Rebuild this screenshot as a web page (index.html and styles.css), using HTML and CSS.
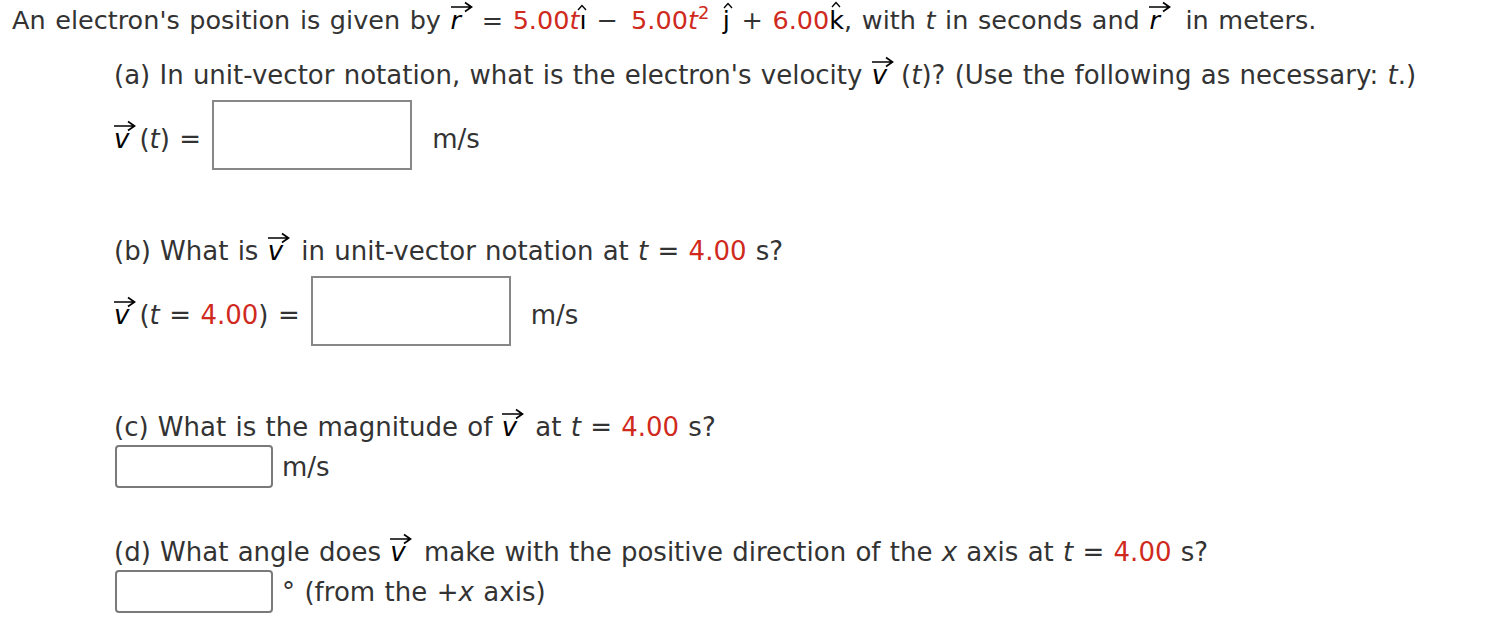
FILE: index.html
```html
<!DOCTYPE html>
<html>
<head>
<meta charset="utf-8">
<link rel="stylesheet" href="styles.css">
</head>
<body>
<div class="page">
  <div class="line intro">An electron's position is given by <span class="vec vec-r1"><i class="sym">r</i><svg class="arrow" width="24" height="12" viewBox="0 0 24 12"><path d="M1 6H21M15 1.5L21.5 6L15 10.5" fill="none" stroke="#000" stroke-width="1.7"/></svg></span> = <span class="red">5.00<i>t</i></span><span class="hat hat-i">ı<svg class="caret" width="10" height="7" viewBox="0 0 10 7"><path d="M1 6L5 1.5L9 6" fill="none" stroke="#000" stroke-width="1.3"/></svg></span> <span class="op">−</span> <span class="red">5.00<i>t</i></span><sup class="sup">2</sup> <span class="hat hat-j">j<svg class="caret" width="10" height="7" viewBox="0 0 10 7"><path d="M1 6L5 1.5L9 6" fill="none" stroke="#000" stroke-width="1.3"/></svg></span> + <span class="red">6.00</span><span class="hat hat-k">k<svg class="caret" width="10" height="7" viewBox="0 0 10 7"><path d="M1 6L5 1.5L9 6" fill="none" stroke="#000" stroke-width="1.3"/></svg></span>, with <i>t</i> in seconds and <span class="vec vec-r2"><i class="sym">r</i><svg class="arrow" width="24" height="12" viewBox="0 0 24 12"><path d="M1 6H21M15 1.5L21.5 6L15 10.5" fill="none" stroke="#000" stroke-width="1.7"/></svg></span> in meters.</div>

  <div class="part part-a">
    <div class="line q">(a) In unit-vector notation, what is the electron's velocity <span class="vec vec-v vec-q"><i class="sym">v</i><svg class="arrow" width="24" height="12" viewBox="0 0 24 12"><path d="M1 6H21M15 1.5L21.5 6L15 10.5" fill="none" stroke="#000" stroke-width="1.7"/></svg></span>(<i>t</i>)? (Use the following as necessary: <i>t</i>.)</div>
    <div class="row row-big">
      <span class="label"><span class="vec vec-v"><i class="sym">v</i><svg class="arrow" width="24" height="12" viewBox="0 0 24 12"><path d="M1 6H21M15 1.5L21.5 6L15 10.5" fill="none" stroke="#000" stroke-width="1.7"/></svg></span>(<i>t</i>) =</span>
      <input class="box box-big" type="text">
      <span class="label unit-big">m/s</span>
    </div>
  </div>

  <div class="part part-b">
    <div class="line q">(b) What is <span class="vec vec-v vec-sp"><i class="sym">v</i><svg class="arrow" width="24" height="12" viewBox="0 0 24 12"><path d="M1 6H21M15 1.5L21.5 6L15 10.5" fill="none" stroke="#000" stroke-width="1.7"/></svg></span> in unit-vector notation at <i>t</i> = <span class="red">4.00</span> s?</div>
    <div class="row row-big">
      <span class="label"><span class="vec vec-v"><i class="sym">v</i><svg class="arrow" width="24" height="12" viewBox="0 0 24 12"><path d="M1 6H21M15 1.5L21.5 6L15 10.5" fill="none" stroke="#000" stroke-width="1.7"/></svg></span>(<i>t</i> = <span class="red">4.00</span>) =</span>
      <input class="box box-big" type="text">
      <span class="label unit-big">m/s</span>
    </div>
  </div>

  <div class="part part-c">
    <div class="line q">(c) What is the magnitude of <span class="vec vec-v vec-sp"><i class="sym">v</i><svg class="arrow" width="24" height="12" viewBox="0 0 24 12"><path d="M1 6H21M15 1.5L21.5 6L15 10.5" fill="none" stroke="#000" stroke-width="1.7"/></svg></span> at <i>t</i> = <span class="red">4.00</span> s?</div>
    <div class="row row-small">
      <input class="box box-small" type="text">
      <span class="label unit-small">m/s</span>
    </div>
  </div>

  <div class="part part-d">
    <div class="line q">(d) What angle does <span class="vec vec-v vec-sp"><i class="sym">v</i><svg class="arrow" width="24" height="12" viewBox="0 0 24 12"><path d="M1 6H21M15 1.5L21.5 6L15 10.5" fill="none" stroke="#000" stroke-width="1.7"/></svg></span> make with the positive direction of the <i>x</i> axis at <i>t</i> = <span class="red">4.00</span> s?</div>
    <div class="row row-small">
      <input class="box box-small" type="text">
      <span class="label unit-small">° (from the +<i>x</i> axis)</span>
    </div>
  </div>
</div>
</body>
</html>
```

FILE: styles.css
```css
html, body {
  margin: 0;
  padding: 0;
  background: #fff;
}

.page {
  font-family: "DejaVu Sans", Verdana, sans-serif;
  font-size: 26px;
  color: #333;
  padding-left: 12px;
}

.line {
  line-height: 38px;
  white-space: nowrap;
}

.intro {
  font-size: 25.5px;
  word-spacing: 1.5px;
  padding-top: 1px;
}

.q {
  word-spacing: 1px;
}

.red {
  color: #cf2a1d;
}

.sym {
  color: #000;
}

.vec {
  position: relative;
  display: inline-block;
}

.arrow {
  position: absolute;
  left: -1px;
  top: 0;
}

.vec-r1 {
  margin-right: 11px;
}

.vec-r2 {
  margin-right: 16px;
}

.vec-v {
  padding-right: 10px;
}

.vec-q {
  padding-right: 14px;
}

.vec-sp {
  padding-right: 9px;
}

.op {
  margin-right: 4px;
}

.hat {
  position: relative;
  display: inline-block;
  color: #000;
}

.caret {
  position: absolute;
  top: 2px;
  left: 0;
}

.hat-i .caret {
  left: -2px;
  top: 3px;
}

.hat-j {
  margin-left: 4px;
  margin-right: 2px;
}

.hat-j .caret {
  left: 0;
  top: 1px;
}

.hat-k .caret {
  left: 2px;
  top: 0;
}

.sup {
  font-size: 0.7em;
  line-height: 0;
  vertical-align: 0.55em;
  color: #cf2a1d;
}

.part {
  padding-left: 102px;
}

.part-a { margin-top: 17px; }
.part-b { margin-top: 62px; }
.part-c { margin-top: 62px; }
.part-d { margin-top: 45px; }

.row {
  display: flex;
  align-items: center;
  white-space: nowrap;
}

.row-big {
  margin-top: 6px;
}

.row-small {
  margin-top: -1px;
}

.label {
  line-height: 38px;
  padding-top: 8px;
  word-spacing: 1.2px;
}

.box {
  box-sizing: border-box;
  margin: 0;
  padding: 0;
  background: #fff;
  outline: none;
  font: inherit;
}

.box-big {
  width: 200px;
  height: 70px;
  border: 2px solid #878787;
  border-radius: 0;
  margin-left: 11px;
}

.unit-big {
  margin-left: 20px;
}

.box-small {
  width: 158px;
  height: 43px;
  border: 2px solid #7a7a7a;
  border-radius: 4px;
  margin-left: 1px;
}

.unit-small {
  margin-left: 9px;
  padding-top: 0;
}
```
